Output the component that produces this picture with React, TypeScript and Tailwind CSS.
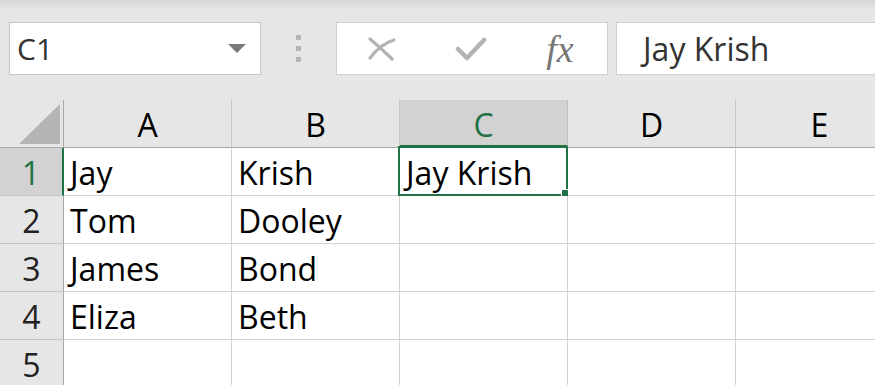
import React from "react";

const font = { fontFamily: "'Open Sans', 'Noto Sans', sans-serif" };

const columns = ["A", "B", "C", "D", "E"];
const rows: string[][] = [
    ["Jay", "Krish", "Jay Krish", "", ""],
    ["Tom", "Dooley", "", "", ""],
    ["James", "Bond", "", "", ""],
    ["Eliza", "Beth", "", "", ""],
    ["", "", "", "", ""],
];

function Toolbar() {
    return (
        <div className="h-[100px] flex items-start pt-[22px] pl-[9px] bg-[linear-gradient(#d8d8d8,#e6e6e6_10px)]">
            {/* Name box */}
            <div className="w-[252px] h-[53px] bg-white border border-[#c6c6c6] flex items-center justify-between pl-[7px] pr-[14px]">
                <span className="text-[30px] text-[#333] leading-none">C1</span>
                <svg width="18" height="10" viewBox="0 0 18 10">
                    <polygon points="0,0 18,0 9,9" fill="#7a7a7a" />
                </svg>
            </div>

            {/* Separator dots */}
            <div className="w-[75px] h-[53px] flex flex-col items-center justify-center gap-[6px]">
                <span className="w-[5px] h-[5px] bg-[#b4b4b4]" />
                <span className="w-[5px] h-[5px] bg-[#b4b4b4]" />
                <span className="w-[5px] h-[5px] bg-[#b4b4b4]" />
            </div>

            {/* Cancel / Enter / fx */}
            <div className="w-[272px] h-[53px] bg-white border border-[#d0d0d0] flex items-center">
                <div className="w-[88px] flex justify-center pl-[2px]">
                    <svg width="30" height="24" viewBox="0 0 30 24">
                        <path d="M3 2 C 10 8, 18 15, 25 22" stroke="#b3b3b3" strokeWidth="3.2" fill="none" strokeLinecap="round" />
                        <path d="M27 3 C 17 6, 9 13, 3 21" stroke="#b3b3b3" strokeWidth="3.2" fill="none" strokeLinecap="round" />
                    </svg>
                </div>
                <div className="w-[92px] flex justify-center">
                    <svg width="32" height="24" viewBox="0 0 32 24">
                        <path d="M3 12 L12 21 L29 3" stroke="#b3b3b3" strokeWidth="4.5" fill="none" strokeLinecap="round" strokeLinejoin="round" />
                    </svg>
                </div>
                <div className="flex-1 flex justify-center pr-[4px]">
                    <span className="text-[38px] italic text-[#777] leading-none" style={{ fontFamily: "'Liberation Serif', 'Times New Roman', serif" }}>
                        fx
                    </span>
                </div>
            </div>

            {/* Formula bar */}
            <div className="ml-[8px] flex-1 h-[53px] bg-white border-y border-l border-[#d0d0d0] flex items-center pl-[26px]">
                <span className="text-[32px] text-[#333] leading-none">Jay Krish</span>
            </div>
        </div>
    );
}

function Sheet() {
    return (
        <div className="grid grid-cols-[64px_168px_168px_168px_168px_168px] grid-rows-[48px_48px_48px_48px_48px_48px] text-[32px] text-black">
            {/* Corner */}
            <div className="bg-[#e6e6e6] border-b border-r border-[#a8a8a8] flex items-end justify-end pr-[3px] pb-[3px]">
                <svg width="41" height="40" viewBox="0 0 41 40">
                    <polygon points="41,0 41,40 0,40" fill="#b5b5b5" />
                </svg>
            </div>

            {columns.map((c) =>
                c === "C" ? (
                    <div key={c} className="bg-[#d2d2d2] border-b-[3px] border-[#217346] border-r border-r-[#c0c0c0] flex items-end justify-center pb-[0px]">
                        <span className="text-[#217346] leading-[40px]">{c}</span>
                    </div>
                ) : (
                    <div key={c} className="bg-[#e6e6e6] border-b border-b-[#a8a8a8] border-r border-r-[#c6c6c6] flex items-end justify-center pb-[2px]">
                        <span className="leading-[40px]">{c}</span>
                    </div>
                )
            )}

            {rows.map((row, i) => (
                <React.Fragment key={i}>
                    {i === 0 ? (
                        <div className="bg-[#d2d2d2] border-r-[2px] border-[#217346] border-b border-b-[#c6c6c6] flex items-end justify-center pb-[2px]">
                            <span className="text-[#217346] leading-[40px]">{i + 1}</span>
                        </div>
                    ) : (
                        <div className="bg-[#e6e6e6] border-r border-r-[#a8a8a8] border-b border-b-[#c6c6c6] flex items-end justify-center pb-[2px]">
                            <span className="text-[#222] leading-[40px]">{i + 1}</span>
                        </div>
                    )}
                    {row.map((v, j) => (
                        <div key={j} className="relative bg-white border-r border-b border-[#d4d4d4] flex items-end pl-[6px] pb-[2px]">
                            <span className="leading-[40px] whitespace-nowrap">{v}</span>
                            {i === 0 && j === 2 && (
                                <div className="absolute -left-[2px] -top-[2px] -right-[1px] -bottom-[1px] border-[2px] border-[#217346]">
                                    <div className="absolute -right-[4px] -bottom-[4px] w-[9px] h-[9px] bg-[#217346] border border-white" />
                                </div>
                            )}
                        </div>
                    ))}
                </React.Fragment>
            ))}
        </div>
    );
}

export default function App() {
    return (
        <div className="w-[875px] h-[385px] overflow-hidden bg-white" style={font}>
            <Toolbar />
            <Sheet />
        </div>
    );
}
